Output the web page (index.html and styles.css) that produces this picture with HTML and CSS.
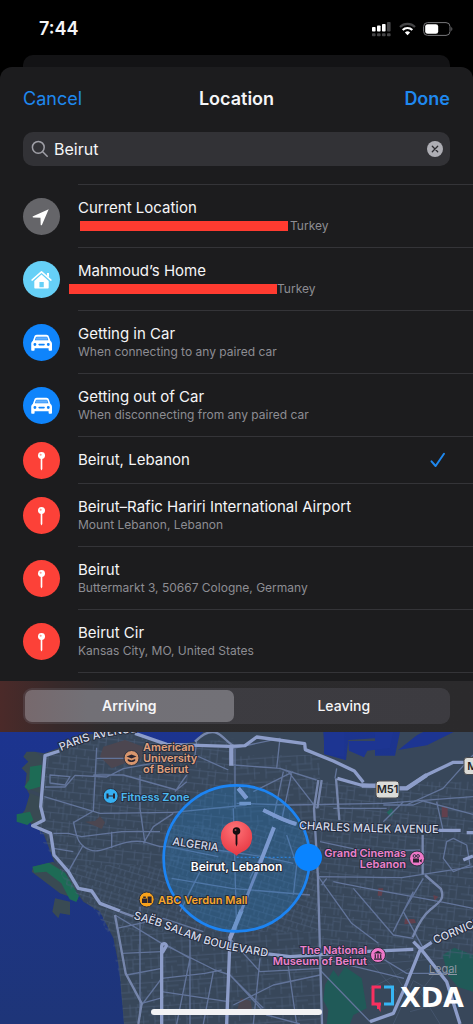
FILE: index.html
```html
<!DOCTYPE html>
<html lang="en">
<head>
  <meta charset="UTF-8" />
  <meta name="viewport" content="width=device-width, initial-scale=1" />
  <title>Location</title>
  <link rel="stylesheet" href="styles.css">
</head>
<body>
  <!-- shared icons -->
  <svg class="sprite" aria-hidden="true">
    <symbol id="i-pin" viewBox="0 0 36 36">
      <path d="M17.2 15h1.6v11.2l-.8 1.6-.8-1.6z" fill="#fff" />
      <circle cx="18" cy="13.2" r="3.4" fill="#fff" />
      <circle cx="17.2" cy="12.4" r="1" fill="#ff9a94" />
    </symbol>
    <symbol id="i-car" viewBox="0 0 36 36">
      <path fill="#fff" fill-rule="evenodd" d="M13.4 10.5h9.4c1.2 0 2 .7 2.4 1.8l1.5 4.2c1 .7 1.5 1.6 1.5 2.8v5.8c0 .6-.4 1-1 1h-1.3c-.6 0-1-.4-1-1v-1.4H11.3v1.4c0 .6-.4 1-1 1H9c-.6 0-1-.4-1-1v-5.800c0-1.200.5-2.100 1.500-2.800l1.500-4.200c.4-1.100 1.200-1.800 2.400-1.800zM13.300 12.300c-.4 0-.7.2-.8.6l-1 3h13.200l-1-3c-.1-.4-.4-.6-.8-.6zM11.600 18.600a1.400 1.400 0 1 0 0 2.800 1.400 1.400 0 0 0 0-2.800zM24.600 18.600a1.400 1.400 0 1 0 0 2.800 1.400 1.400 0 0 0 0-2.800zM15.700 19.300c-1 0-1 1.500 0 1.500h4.800c1 0 1-1.500 0-1.500z" />
      <path fill="#fff" opacity=".35" d="M13 13h10.200l.8 2.400H12.200z" />
    </symbol>
  </svg>

  <div class="status-bar">
    <span class="clock">7:44</span>
    <div class="status-icons">
      <svg width="20" height="16" viewBox="0 0 20 16">
        <g fill="#fff">
          <rect x="0" y="6" width="3.600" height="4.500" rx=".8" />
          <rect x="5" y="4.500" width="3.600" height="6" rx=".8" />
          <rect x="10" y="3" width="3.600" height="7.500" rx=".8" />
        </g>
        <g fill="#454547">
          <rect x="15" y="1" width="3.600" height="9.500" rx=".8" />
          <rect x="0" y="12.200" width="3.600" height="3" rx=".8" />
          <rect x="5" y="12.200" width="3.600" height="3" rx=".8" />
          <rect x="10" y="12.200" width="3.600" height="3" rx=".8" />
          <rect x="15" y="12.200" width="3.600" height="3" rx=".8" />
        </g>
      </svg>
      <svg width="17" height="14" viewBox="0 0 17 14" fill="none">
        <path d="M1 5a10.600 10.600 0 0 1 15 0" stroke="#454547" stroke-width="2.200" />
        <path d="M3.700 8a6.800 6.800 0 0 1 9.600 0" stroke="#fff" stroke-width="2.200" />
        <path d="M8.500 13.200 5.900 10.500a3.800 3.800 0 0 1 5.200 0z" fill="#fff" />
      </svg>
      <svg width="30" height="14" viewBox="0 0 30 14" fill="none">
        <rect x=".6" y=".6" width="26.400" height="12.800" rx="4" stroke="#77777a" />
        <rect x="2.200" y="2.200" width="13" height="9.600" rx="2.400" fill="#fff" />
        <path d="M28.400 5v4c1.200-.5 1.200-3.500 0-4z" fill="#77777a" />
      </svg>
    </div>
  </div>

  <div class="sheet-behind"></div>

  <main class="sheet">
    <header class="sheet-header">
      <button class="nav-btn" type="button">Cancel</button>
      <h1>Location</h1>
      <button class="nav-btn nav-done" type="button">Done</button>
    </header>

    <form class="search">
      <svg width="18" height="18" viewBox="0 0 18 18" fill="none" stroke="#a0a0a7" stroke-width="1.500" stroke-linecap="round">
        <circle cx="7.300" cy="7.300" r="5.900" />
        <path d="M11.700 11.700 16.200 16.200" />
      </svg>
      <input type="text" value="Beirut" aria-label="Search" />
      <button class="clear-btn" type="reset" aria-label="Clear">
        <svg width="16" height="16" viewBox="0 0 16 16">
          <circle cx="8" cy="8" r="8" fill="#aeaeb4" />
          <path d="M5.300 5.300l5.400 5.400M10.700 5.300l-5.400 5.400" stroke="#2c2c30" stroke-width="1.300" stroke-linecap="round" />
        </svg>
      </button>
    </form>

    <ul class="places">
      <li>
        <button class="place" type="button">
          <svg class="place-icon gray" viewBox="0 0 36 36"><path d="M25 11 18.400 26.200c-.3.6-1.100.5-1.200-.2l-.2-6.700-7-.3c-.8-.1-.9-.9-.2-1.200z" fill="#fff" /></svg>
          <span class="place-text">
            <span class="place-title">Current Location</span>
            <span class="place-sub"><span class="redacted"></span>Turkey</span>
          </span>
        </button>
      </li>
      <li>
        <button class="place" type="button">
          <svg class="place-icon cyan" viewBox="0 0 36 36">
            <path d="M8.800 18.600 18 10.600l9.200 8" fill="none" stroke="#fff" stroke-width="1.500" stroke-linecap="round" stroke-linejoin="round" />
            <path d="M23.300 11.600h2v4.300l-2-1.800z" fill="#fff" />
            <path fill="#fff" fill-rule="evenodd" d="M18 13.200l7 6.200v6.400c0 .6-.4 1-1 1H12c-.6 0-1-.4-1-1v-6.400zM16 20.500v5h4.200v-5z" />
          </svg>
          <span class="place-text">
            <span class="place-title">Mahmoud’s Home</span>
            <span class="place-sub"><span class="redacted wide"></span>Turkey</span>
          </span>
        </button>
      </li>
      <li>
        <button class="place" type="button">
          <svg class="place-icon blue"><use href="#i-car" /></svg>
          <span class="place-text">
            <span class="place-title">Getting in Car</span>
            <span class="place-sub">When connecting to any paired car</span>
          </span>
        </button>
      </li>
      <li>
        <button class="place" type="button">
          <svg class="place-icon blue"><use href="#i-car" /></svg>
          <span class="place-text">
            <span class="place-title">Getting out of Car</span>
            <span class="place-sub">When disconnecting from any paired car</span>
          </span>
        </button>
      </li>
      <li>
        <button class="place single" type="button" aria-pressed="true">
          <svg class="place-icon red"><use href="#i-pin" /></svg>
          <span class="place-text">
            <span class="place-title">Beirut, Lebanon</span>
          </span>
          <svg class="check" width="16" height="16" viewBox="0 0 16 16" fill="none" stroke="#1f88ee" stroke-width="2" stroke-linecap="round" stroke-linejoin="round">
            <path d="M1.500 9.300 5.600 14 14 1.800" />
          </svg>
        </button>
      </li>
      <li>
        <button class="place" type="button">
          <svg class="place-icon red"><use href="#i-pin" /></svg>
          <span class="place-text">
            <span class="place-title">Beirut–Rafic Hariri International Airport</span>
            <span class="place-sub">Mount Lebanon, Lebanon</span>
          </span>
        </button>
      </li>
      <li>
        <button class="place" type="button">
          <svg class="place-icon red"><use href="#i-pin" /></svg>
          <span class="place-text">
            <span class="place-title">Beirut</span>
            <span class="place-sub">Buttermarkt 3, 50667 Cologne, Germany</span>
          </span>
        </button>
      </li>
      <li>
        <button class="place" type="button">
          <svg class="place-icon red"><use href="#i-pin" /></svg>
          <span class="place-text">
            <span class="place-title">Beirut Cir</span>
            <span class="place-sub">Kansas City, MO, United States</span>
          </span>
        </button>
      </li>
    </ul>

    <div class="toolbar">
      <div class="segmented">
        <input type="radio" name="trigger" id="arriving" checked />
        <label for="arriving">Arriving</label>
        <input type="radio" name="trigger" id="leaving" />
        <label for="leaving">Leaving</label>
      </div>
    </div>

    <section class="map">
      <svg class="map-canvas" viewBox="0 0 473 292" preserveAspectRatio="xMidYMid slice">
        <defs>
          <linearGradient id="sea" x1="0" y1="0" x2="0" y2="1">
            <stop offset="0" stop-color="#1c3490" />
            <stop offset="1" stop-color="#1e3578" />
          </linearGradient>
          <radialGradient id="balloon" cx=".45" cy=".25" r=".8">
            <stop offset="0" stop-color="#ff7378" />
            <stop offset="1" stop-color="#e5343f" />
          </radialGradient>
          <pattern id="blocks-a" width="84" height="66" patternUnits="userSpaceOnUse" patternTransform="rotate(6)">
            <path d="M0 8h84M0 30h48M0 47h84M22 0v30M48 8v58M70 0v47M10 47v19M34 30v17M60 47v19M48 19h22" />
          </pattern>
          <pattern id="blocks-b" width="60" height="54" patternUnits="userSpaceOnUse" patternTransform="rotate(17)">
            <path d="M0 6h60M0 21h60M0 38h60M12 0v21M30 6v48M47 0v38M20 21v17M8 38v16M54 38v16" />
          </pattern>
          <pattern id="blocks-c" width="96" height="72" patternUnits="userSpaceOnUse" patternTransform="rotate(-4)">
            <path d="M0 10h96M0 36h60M18 54h78M18 10v62M42 0v36M60 10v44M80 36v36M66 0v10M60 24h36" />
          </pattern>
          <clipPath id="land-clip">
            <path d="M135 92 330 30 400 21 500 62 600 50 780 32 910 50 1000 108 1090 165 1210 185 1419 95V897H372L360 760 330 640 290 560 200 480 160 400 98 302 130 270 122 220Z" />
          </clipPath>
          <path id="road-paris" d="M61 19C84 9 107 3 137 0" />
          <path id="road-algeria" d="M172 113 222 120" />
          <path id="road-charles" d="M299 97 Q360 101 445 101" />
          <path id="road-saeb" d="M133 187C160 193 178 203 203 211S240 220 275 226" />
          <path id="road-corniche" d="M435 212 500 185" />
        </defs>

        <g transform="translate(0 -7) scale(.33333)">
          <rect x="-20" y="0" width="1460" height="920" fill="url(#sea)" />

          <!-- land -->
          <path fill="#38475a" d="M132 85 185 66 250 30 390 15 440 36 520 60 585 50 610 21H970L975 88 1038 106 1045 45 1125 40 1125 92H1185L1200 21H1270L1250 50 1300 21H1419V897H372L358 730 340 640 300 560 250 530 218 485 180 455 158 398 130 325 98 302 80 280 92 215 78 190 85 95 105 80Z" />
          <path fill="#1d3592" d="M972 21h62v75l-62-8zM1045 48h80v-27h55l-10 48-68 8-10 20-45-20zM1195 75c40-30 60-54 82-54h84l-80 40z" />
          <path fill="#394a53" d="M105 80l20 15-5 110-25-10-20-5 5-45-15-15 20-20-15-15 10-15zM90 205l40 15v65l-25 10-50-15 20-25zM100 425l60-15 60 60 15 55-55-20-85-65zM165 520l45 10v40l-30-5-5 15-18-20z" />
          <path fill="#1d6b55" d="M90 125l35-5-5 65-35 10-12-10 15-20zM50 268l40-8 10 25-18 15-32-10zM97 425l50-12 48 30 42 70-8 18-20-8-25-48-45-35-36 3z" />
          <path fill="#205a58" d="M975 780 1000 735 1015 755 1035 725 1085 760 1100 850 1060 870 1050 897H980L985 855 970 825ZM1328 690l35-22 56 22v110l-45-14-30-35z" />

          <!-- small streets -->
          <g class="streets" clip-path="url(#land-clip)">
            <path class="fill-a" d="M120 30H700V420H120Z" />
            <path class="fill-b" d="M180 420H960V620H180ZM500 300H940V420H500Z" />
            <path class="fill-c" d="M700 90H960V300H700ZM340 620H960V897H340Z" />
            <path class="fill-a" d="M960 170H1419V700H960Z" />
            <path d="M1100 700l90 100M1150 690l80 130M1090 720l240-20M1110 790l120-60M1180 897l60-130 90 50M1260 800l60 97M1230 860l110-30M1300 750l-70 90" />
          </g>

          <path fill="#4c4650" d="M310 65 375 45 430 65 425 100 375 115 335 130 300 95Z" />
          <path fill="#4c4650" d="M255 290l30-2 15-14 15 18-10 20-18-8zM722 820l30 8 5 30-45-5z" />
          <path fill="#62404d" d="M1325 245h18v32h-18zM1215 582h28l5 12-35 4zM1135 490h15l-5 22h-12zM1300 510l15 5-12 12z" />
          <path fill="#22665e" d="M1160 262l15-12 6 15-10 10z" />

          <!-- connecting streets -->
          <g class="secondary">
            <path d="M135 186h60l30-35 95 5 50-25 220-40M150 150l60 5-15 25-45-6zM290 68l-10 190-60 35M133 215 300 265 520 262 740 240M290 100h120M280 150h90l160 45 30-25M420 150v100l15 105M590 50l-5 40 100 45M560 150l-35 50" />
            <path d="M160 325h45l40 10 120-15h115M220 290c10 40 10 70 50 85s90-35 160-25l50 15h30M430 355l30-50 60-40M205 440l45-80M160 370l60 10M335 320v50" />
            <path d="M700 120l140 10 110 35M705 60v190M850 140 820 280M875 145 845 285M760 200l120-60M840 130l25 10 85 110M700 70l140-30-10 90M710 235l160 5 280-5 269-20M1010 130l-5 30" />
            <path d="M650 375l140 20 90 20M505 365l150 30M780 400l-30 60M860 330l30 90-10 90M700 250l10 370M600 440l-60 120M515 460l180 30 235 20" />
            <path d="M955 455l250 3 214-33M1000 470c140 30 230 40 419 80M955 455l100 140 80 60M1060 490l120 140 60 10M1270 460l-60 100 60 110M1150 240l90 0 30-12 149 40M1150 290l60-60M1310 230l20 90M1180 620l60-120M980 460l-15 20" />
            <path d="M1340 350l20-10 40 20 10 60-50 20-30-40zM1000 250h160M960 350l140 30 160-5M1419 90l-90 100-110 50" />
            <path d="M345 570l140 85 160 80 45 15 100 100M365 685l120-5M425 840l60-80 130-15 50-10M420 545v330M380 750l105-20M500 660l70 40-40 197M570 620v277M640 740l-30 157M690 750l110 120 100 27M780 700l-20 197M860 690l30 207M690 640l90 100 185-10M485 800l200 30M425 835l65-18M700 840l120-60 140-30M350 610l140-30 120 40" />
            <path d="M960 735l150 155M962 700l250 60M1130 690l90 55 130 0" />
          </g>

          <!-- main roads -->
          <g class="medium">
            <path d="M955 165 942 250l12 210 12 437M965 165 952 250M1008 160l10 125M1268 330v118M1275 450l48 42c12 30-5 40-30 60s-45 60-55 85" />
            <path d="M345 570l32 175 48 90-10 62M360 560l50 18" />
            <path d="M585 50c20-20 40-32 60-28s40 35 60 43" />
          </g>
          <g class="major">
            <path d="M178 78 135 92 122 245 132 285 98 302 152 325 162 390 205 440 235 490 275 498 300 535 360 558" />
            <path d="M405 25 500 58 690 64 735 62 770 36 914 56 916 74 1000 108 1063 138 1090 172M1012 160l70 20 60 5M1190 190h30l60-40 80-38h40" />
            <path d="M485 897V665c0-12 14-12 14-2l-12 20" />
            <path d="M680 897 690 640 722 560M718 235h35M790 255c30 15 60 32 100 42M1300 316h82M1400 323h19" />
            <path d="M790 685l80 10 220-15 150-7M1110 890l70-25 40-90 40-100M1240 650l25 25 75 95 40 127M1265 672l30-20M1390 405l29-12" />
          </g>
          <g class="highway">
            <path d="M694 62V122M690 640l35-85M715 190l25 30M1085 182h50M1190 190h30l60-40" />
          </g>

          <!-- geofence -->
          <circle cx="710" cy="400" r="219" fill="#1b7cc8" fill-opacity=".28" stroke="#1c84f3" stroke-width="8" />
          <path d="M710 397h180" stroke="#2a7fd4" stroke-width="4" stroke-dasharray="6 6" />
          <path d="M778 420l44-113M715 190l25 30" stroke="#7b99cf" stroke-width="12" />
          <path d="M778 420l-55 140" stroke="#6787bd" stroke-width="9" />
          <path d="M790 255c30 15 60 32 98 42" fill="none" stroke="#7b99cf" stroke-width="12" />
          <circle cx="925" cy="397" r="41" fill="#0a84ff" />
        </g>

        <!-- place badges -->
        <g class="badges">
          <circle cx="131.500" cy="26" r="7.500" fill="#d9966d" />
          <path d="M126.500 24.500l5-2 5 2-5 2zM127.800 27v1.800c2 1.700 5.400 1.700 7.400 0V27l-3.700 1.400z" />
          <circle cx="110.700" cy="64" r="7.500" fill="#36b0f2" />
          <path d="M106.500 61.500h2v5h-2zM113 61.500h2v5h-2zM108 63.400h5v1.200h-5z" />
          <circle cx="146.700" cy="167.500" r="7.500" fill="#f8a21b" />
          <path d="M142 166.500h5v4.500h-5zM147.600 164.500h4v6.500h-4zM143.200 166v-1.500h2.600v1.500" />
          <circle cx="417" cy="126.500" r="7.500" fill="#ee78c8" />
          <path d="M413 126.500h6v4h-6zM419.500 128.500l2.200-1.500v3.500l-2.200-1.500z" />
          <circle cx="414.500" cy="124" r="1.400" fill="none" />
          <circle cx="418" cy="124" r="1.400" fill="none" />
          <circle cx="378" cy="223" r="7.500" fill="#ee78c8" />
          <path d="M373.500 221.500l4.500-2.700 4.500 2.700zM374 226.500h8v1.300h-8zM374.700 222.300h1.200v4h-1.200zM377.400 222.300h1.200v4h-1.200zM380.100 222.300h1.200v4h-1.200z" />
        </g>

        <g class="road-names">
          <text><textPath href="#road-paris">PARIS AVENUE</textPath></text>
          <text><textPath href="#road-algeria">ALGERIA</textPath></text>
          <text><textPath href="#road-charles">CHARLES MALEK AVENUE</textPath></text>
          <text><textPath href="#road-saeb">SAËB SALAM BOULEVARD</textPath></text>
          <text><textPath href="#road-corniche">CORNICHE</textPath></text>
        </g>

        <g class="shields">
          <rect x="376" y="49" width="23" height="17" rx="3" />
          <text x="387.500" y="61">M51</text>
          <rect x="464" y="25.500" width="23" height="17" rx="3" />
          <text x="478" y="38">M51</text>
        </g>

        <g class="poi-names">
          <text class="poi-school"><tspan x="143" y="19">American</tspan><tspan x="143" y="30">University</tspan><tspan x="143" y="41">of Beirut</tspan></text>
          <text class="poi-gym" x="121" y="69">Fitness Zone</text>
          <text class="poi-mall" x="158" y="172">ABC Verdun Mall</text>
          <text class="poi-fun"><tspan x="406" y="125">Grand Cinemas</tspan><tspan x="406" y="136">Lebanon</tspan></text>
          <text class="poi-fun"><tspan x="367" y="222">The National</tspan><tspan x="367" y="233">Museum of Beirut</tspan></text>
        </g>

        <!-- selected place -->
        <path fill="url(#balloon)" d="M236.500 89a16 16 0 0 1 7.500 30c-3 1.600-5.500 2.600-7.500 4.800-2-2.200-4.500-3.200-7.500-4.800a16 16 0 0 1 7.500-30z" />
        <circle cx="236.500" cy="99" r="3.800" fill="#140d10" />
        <path d="M235.600 101h1.800v11l-.9 2.500-.9-2.500z" fill="#140d10" />
        <circle cx="235.500" cy="98" r="1" fill="#a8454c" />
        <text class="pin-name" x="236.500" y="139">Beirut, Lebanon</text>
      </svg>

      <a class="legal" href="#">Legal</a>

      <div class="brand">
        <svg width="25" height="27" viewBox="0 0 25 27" fill="none">
          <path d="M10 2H2v17h5.500v5" stroke="#f8305f" stroke-width="3" />
          <path d="M5 19.500h4.500V27z" fill="#f8305f" />
          <path d="M8.500 19H10" stroke="#f8305f" stroke-width="3" />
          <path d="M13 2h8.500v17H13" stroke="#35b5f4" stroke-width="3" />
        </svg>
        <span>XDA</span>
      </div>

      <div class="home-indicator"></div>
    </section>
  </main>
</body>
</html>
```
FILE: styles.css
```css
:root {
  --sheet: #1c1c1e;
  --field: #323236;
  --line: #343438;
  --blue: #1f88ee;
  --text: #f5f5f7;
  --subtle: #8d8d93;
  --red: #fc4138;
}

* {
  box-sizing: border-box;
  margin: 0;
  padding: 0;
}

body {
  font-family: Inter, "Liberation Sans", sans-serif;
  background: #000;
  color: var(--text);
  display: flex;
  flex-direction: column;
  min-height: 100vh;
}

button {
  background: none;
  border: none;
  color: inherit;
  font: inherit;
  cursor: pointer;
}

.sprite {
  position: absolute;
  width: 0;
  height: 0;
}

/* status bar */
.status-bar {
  display: flex;
  justify-content: space-between;
  align-items: center;
  height: 55px;
  padding: 2px 20px 0 39px;
}

.clock {
  font-size: 18px;
  font-weight: 600;
}

.status-icons {
  display: flex;
  align-items: center;
  gap: 7px;
}

/* sheets */
.sheet-behind {
  height: 12px;
  margin: 0 23px;
  background: #131315;
  border-radius: 10px 10px 0 0;
}

.sheet {
  flex: 1;
  display: flex;
  flex-direction: column;
  background: var(--sheet);
  border-radius: 12px 12px 0 0;
}

.sheet-header {
  display: grid;
  grid-template-columns: 1fr auto 1fr;
  align-items: center;
  height: 65px;
  padding: 0 23px 2px;
}

.sheet-header h1 {
  font-size: 18px;
  font-weight: 600;
}

.nav-btn {
  justify-self: start;
  color: var(--blue);
  font-size: 18px;
}

.nav-done {
  justify-self: end;
  font-weight: 600;
}

.search {
  display: flex;
  align-items: center;
  gap: 5px;
  height: 34px;
  margin: 0 23px 18px;
  padding: 0 7px 0 8px;
  background: var(--field);
  border-radius: 10px;
}

.search input {
  flex: 1;
  min-width: 0;
  background: none;
  border: none;
  outline: none;
  color: var(--text);
  font: 16px Inter, "Liberation Sans", sans-serif;
}

.clear-btn {
  display: flex;
}

/* places */
.places {
  list-style: none;
  padding-bottom: 8px;
}

.places li {
  position: relative;
  border-bottom: 1px solid transparent;
}

.places li::after {
  content: "";
  position: absolute;
  left: 78px;
  right: 0;
  bottom: -1px;
  height: 1px;
  background: var(--line);
}

.places li:first-child {
  border-top: 1px solid transparent;
}

.places li:first-child::before {
  content: "";
  position: absolute;
  left: 78px;
  right: 0;
  top: -1px;
  height: 1px;
  background: var(--line);
}

.place {
  display: flex;
  align-items: center;
  gap: 18px;
  width: 100%;
  height: 62px;
  padding: 0 27px 0 23px;
  text-align: left;
}

.place.single {
  height: 46px;
}

.place-icon {
  flex: none;
  width: 37px;
  height: 37px;
  border-radius: 50%;
}

.gray { background: #656569; }
.cyan { background: #66d0f7; }
.blue { background: #0f84fb; }
.red { background: var(--red); }

.place-text {
  flex: 1;
  display: flex;
  flex-direction: column;
}

.place-title {
  font-size: 15px;
  line-height: 20px;
}

.place-sub {
  display: flex;
  align-items: center;
  color: var(--subtle);
  font-size: 12px;
  line-height: 16px;
}

.redacted {
  width: 208px;
  height: 10px;
  margin: 0 2px;
  background: #ff3b30;
}

.redacted.wide {
  margin: 0 0 0 -9px;
}

/* arriving / leaving */
.toolbar {
  padding: 7px 23px 8px;
  background: linear-gradient(90deg, #4b2a29, #37292a 12%, #2c2b2d 24%, #2b2a2c);
}

.segmented {
  display: flex;
  gap: 6px;
  padding: 2px;
  background: rgba(118, 118, 128, 0.24);
  border-radius: 9px;
}

.segmented input {
  position: absolute;
  opacity: 0;
}

.segmented label {
  flex: 1;
  border-radius: 7px;
  font-size: 14px;
  font-weight: 500;
  line-height: 32px;
  text-align: center;
  cursor: pointer;
}

.segmented input:checked + label {
  background: linear-gradient(90deg, #77696d, #727076 30%, #727177);
  font-weight: 600;
}

/* map */
.map {
  flex: 1;
  position: relative;
  display: flex;
  min-height: 240px;
  overflow: hidden;
}

.map-canvas {
  display: block;
  width: 100%;
  height: auto;
}

.streets path,
pattern path {
  fill: none;
  stroke: #4b5c77;
  stroke-width: 2;
}

.streets .fill-a,
.streets .fill-b,
.streets .fill-c {
  stroke: none;
}

.streets .fill-a { fill: url(#blocks-a); }
.streets .fill-b { fill: url(#blocks-b); }
.streets .fill-c { fill: url(#blocks-c); }

.secondary,
.medium,
.major,
.highway {
  fill: none;
  stroke-linejoin: round;
}

.secondary {
  stroke: #62749a;
  stroke-width: 4;
}

.medium {
  stroke: #7686ac;
  stroke-width: 7;
}

.major {
  stroke: #8d9dc9;
  stroke-width: 10;
}

.highway {
  stroke: #8d9dc9;
  stroke-width: 13;
}

.badges path {
  fill: #2a2430;
}

.badges circle {
  stroke: #2b3040;
  stroke-width: 1;
}

.map text {
  font-size: 11px;
  font-weight: 600;
}

.map .road-names text {
  fill: #d5daea;
  font-weight: 500;
}

.road-names text,
.poi-names text,
.pin-name {
  paint-order: stroke;
  stroke: #252d3d;
  stroke-width: 2px;
  stroke-linejoin: round;
}

.shields rect {
  fill: #dcdcd8;
  stroke: #4a4a4c;
}

.shields text {
  fill: #222226;
  text-anchor: middle;
}

.poi-school { fill: #e0a07c; }
.poi-gym { fill: #4cb8f0; }
.poi-mall { fill: #f8a62a; }

.poi-fun {
  fill: #ee82cc;
  text-anchor: end;
}

.map .pin-name {
  fill: #fff;
  font-size: 12px;
  text-anchor: middle;
}

.legal {
  position: absolute;
  right: 16px;
  bottom: 48px;
  color: #8e96a4;
  font-size: 11px;
}

.brand {
  position: absolute;
  right: 9px;
  bottom: 10px;
  display: flex;
  align-items: center;
  gap: 4px;
  color: #fff;
  font-family: "DejaVu Sans", Verdana, sans-serif;
  font-size: 27px;
  font-weight: 700;
  line-height: 32px;
}

.home-indicator {
  position: absolute;
  left: 32%;
  right: 32%;
  bottom: 9px;
  height: 6px;
  border-radius: 3px;
  background: #f2f2f4;
}
```
